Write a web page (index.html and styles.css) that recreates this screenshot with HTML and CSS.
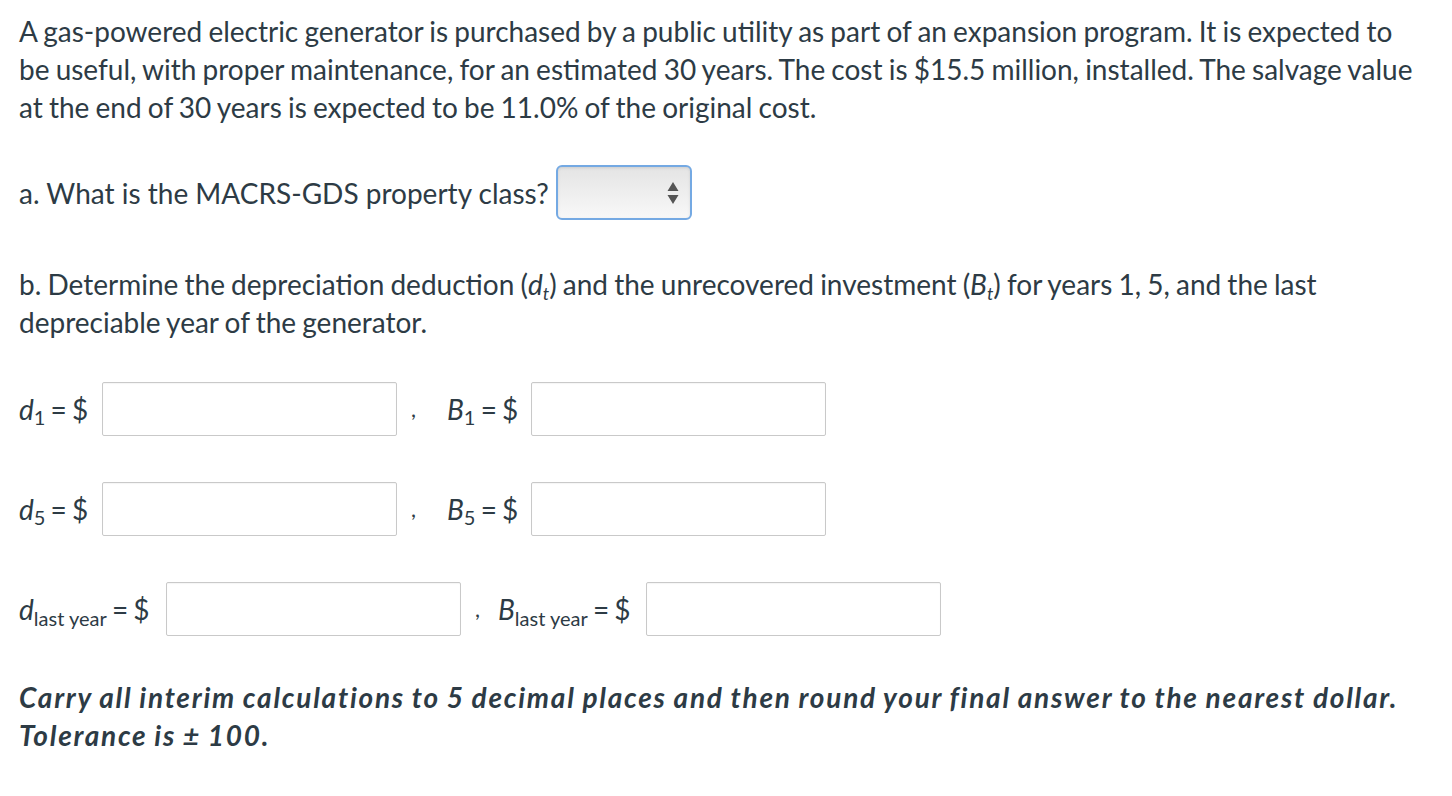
FILE: index.html
```html
<!DOCTYPE html>
<html>
<head>
<meta charset="utf-8">
<link rel="stylesheet" href="styles.css">
</head>
<body>
<div class="question">
  <p class="intro">A gas-powered electric generator is purchased by a public utility as part of an expansion program. It is expected to be useful, with proper maintenance, for an estimated 30 years. The cost is $15.5 million, installed. The salvage value at the end of 30 years is expected to be 11.0% of the original cost.</p>

  <div class="part-a">
    <span>a. What is the MACRS-GDS property class?</span>
    <span class="select">
      <svg class="arrows" width="12" height="24" viewBox="0 0 12 24"><path d="M6 1 L11.5 10 L0.5 10 Z M6 23 L11.5 14 L0.5 14 Z" fill="#555"/></svg>
    </span>
  </div>

  <p class="part-b">b. Determine the depreciation deduction (<i>d<sub>t</sub></i>) and the unrecovered investment (<i>B<sub>t</sub></i>) for years 1, 5, and the last depreciable year of the generator.</p>

  <div class="row row-1">
    <span class="lbl"><i>d</i><sub>1</sub> = $</span>
    <span class="input"></span>
    <span class="comma">,</span>
    <span class="lbl lbl-b"><i>B</i><sub>1</sub> = $</span>
    <span class="input"></span>
  </div>
  <div class="row">
    <span class="lbl"><i>d</i><sub>5</sub> = $</span>
    <span class="input"></span>
    <span class="comma">,</span>
    <span class="lbl lbl-b"><i>B</i><sub>5</sub> = $</span>
    <span class="input"></span>
  </div>
  <div class="row row-last">
    <span class="lbl lbl-d2"><i>d</i><sub class="long">last year</sub> = $</span>
    <span class="input"></span>
    <span class="comma comma-2">,</span>
    <span class="lbl lbl-b2"><i>B</i><sub class="long">last year</sub> = $</span>
    <span class="input"></span>
  </div>

  <p class="note">Carry all interim calculations to 5 decimal places and then round your final answer to the nearest dollar. Tolerance is ± 100.</p>
</div>
</body>
</html>
```
FILE: styles.css
```css
html, body {
  margin: 0;
  padding: 0;
  background: #ffffff;
}
body {
  font-family: Lato, "Open Sans", sans-serif;
  color: #2d3b45;
  font-size: 28px;
  line-height: 38px;
}
.question {
  padding: 12px 20px 0 19px;
  width: 1400px;
}
p { margin: 0; }
.intro {
  word-spacing: -1px;
}
.part-a {
  display: flex;
  align-items: center;
  gap: 7px;
  margin-top: 39px;
}
.select {
  display: flex;
  align-items: center;
  justify-content: flex-end;
  box-sizing: border-box;
  width: 136px;
  height: 55px;
  border: 2px solid #74a9e3;
  border-radius: 6px;
  background: linear-gradient(#e4e4e4, #f8f8f8);
  box-shadow: inset 0 1px 3px rgba(0,0,0,0.10);
  padding-right: 11px;
}
.part-b {
  margin-top: 45px;
  word-spacing: -1px;
}
.part-b i { font-style: italic; }
.part-b sub, .lbl sub {
  font-size: 20px;
  line-height: 0;
  vertical-align: -5px;
  font-style: normal;
}
.part-b sub { font-style: italic; font-size: 18px; }
.row {
  display: flex;
  align-items: center;
  margin-top: 46px;
}
.row-1 { margin-top: 41px; }
.lbl {
  white-space: nowrap;
  width: 83px;
  flex: none;
  word-spacing: -2px;
}
.lbl i { font-style: italic; }
.lbl sub.long { font-size: 20px; vertical-align: -6px; word-spacing: 0; }
.lbl-d2 { width: 147px; }
.input {
  box-sizing: border-box;
  flex: none;
  width: 295px;
  height: 54px;
  border: 1px solid #c9c9c9;
  border-radius: 2px;
  background: #fff;
  box-shadow: inset 0 1px 1px rgba(0,0,0,0.04);
}
.comma {
  flex: none;
  width: 50px;
  padding-left: 14px;
  box-sizing: border-box;
  font-size: 22px;
}
.comma-2 { width: 37px; }
.lbl-b { width: 84px; }
.lbl-b2 { width: 148px; }
.note {
  margin-top: 42px;
  font-weight: bold;
  font-style: italic;
  letter-spacing: 1.75px;
  word-spacing: -1px;
}
```
